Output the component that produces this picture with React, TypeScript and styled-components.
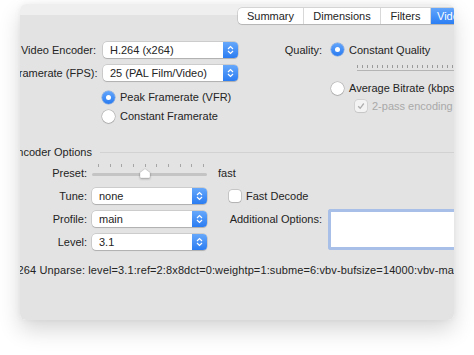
import styled, { createGlobalStyle } from 'styled-components';

const GlobalStyle = createGlobalStyle`
  html, body {
    margin: 0;
    background: #ffffff;
  }
  body {
    font-family: "Liberation Sans", Arial, sans-serif;
    font-size: 11px;
    color: #242424;
  }
`;

const Page = styled.div`
  width: 474px;
  height: 355px;
  padding: 4px 0 0 20px;
  box-sizing: border-box;
  overflow: hidden;
`;

const Window = styled.div`
  width: 434px;
  height: 316px;
  border-radius: 6px;
  overflow: hidden;
  background: linear-gradient(to bottom, #efefef 0, #efefef 11px, #e3e3e3 11px);
  box-shadow: 0 10px 22px rgba(0, 0, 0, 0.16), 0 0 6px rgba(0, 0, 0, 0.05);
`;

const TabBar = styled.div`
  display: flex;
  width: max-content;
  height: 16px;
  margin: 4px 0 0 218px;
  border-radius: 4px;
  background: #ffffff;
  box-shadow: 0 0 0 0.5px rgba(0, 0, 0, 0.22), 0 1px 1px rgba(0, 0, 0, 0.1);
  overflow: hidden;
`;

const Tab = styled.div<{ $w: number; $active?: boolean }>`
  width: ${p => p.$w}px;
  display: flex;
  align-items: center;
  justify-content: ${p => (p.$active ? 'flex-start' : 'center')};
  padding-left: ${p => (p.$active ? '6px' : '0')};
  box-sizing: border-box;
  line-height: 16px;
  background: ${p => (p.$active ? 'linear-gradient(#62a5fb, #2b7ef4)' : 'transparent')};
  color: ${p => (p.$active ? '#ffffff' : '#242424')};

  & + & {
    border-left: 1px solid #d8d8d8;
  }
`;

const Content = styled.div`
  margin-left: -8px;
`;

const TopSection = styled.div`
  display: flex;
  gap: 12px;
  padding-top: 17px;
`;

const Column = styled.div<{ $w?: number }>`
  display: flex;
  flex-direction: column;
  width: ${p => (p.$w ? `${p.$w}px` : 'auto')};
  flex: ${p => (p.$w ? 'none' : '1')};
`;

const FormRow = styled.div<{ $cols: string; $gap: number; $h: number; $mt?: number }>`
  display: grid;
  grid-template-columns: ${p => p.$cols};
  column-gap: ${p => p.$gap}px;
  align-items: center;
  height: ${p => p.$h}px;
  margin-top: ${p => p.$mt ?? 0}px;
  white-space: nowrap;
`;

const Label = styled.span`
  text-align: right;
  white-space: nowrap;
  direction: rtl;
  unicode-bidi: plaintext;
`;

const Popup = styled.div<{ $w: number }>`
  display: flex;
  align-items: center;
  width: ${p => p.$w}px;
  height: 16px;
  padding-left: 7px;
  box-sizing: border-box;
  border-radius: 4px;
  background: #ffffff;
  box-shadow: 0 0 0 0.5px rgba(0, 0, 0, 0.2), 0 1px 1px rgba(0, 0, 0, 0.14);
`;

const Stepper = styled.span`
  display: flex;
  align-items: center;
  justify-content: center;
  width: 15px;
  height: 100%;
  margin-left: auto;
  border-radius: 0 4px 4px 0;
  background: linear-gradient(#66a8fb, #2b7cf2);
`;

const Choice = styled.label<{ $indent?: number; $disabled?: boolean }>`
  display: flex;
  align-items: center;
  gap: 5px;
  margin-left: ${p => p.$indent ?? 0}px;
  color: ${p => (p.$disabled ? '#a9a9a9' : '#242424')};
`;

const Radio = styled.span<{ $on?: boolean }>`
  display: flex;
  align-items: center;
  justify-content: center;
  width: 13px;
  height: 13px;
  border-radius: 50%;
  flex: none;
  background: ${p => (p.$on ? 'linear-gradient(#62a5fb, #2a7bf1)' : '#ffffff')};
  box-shadow: ${p =>
    p.$on
      ? '0 0 0 0.5px rgba(30, 100, 210, 0.5)'
      : '0 0 0 0.5px rgba(0, 0, 0, 0.25), 0 1px 1px rgba(0, 0, 0, 0.12)'};

  &::after {
    content: '';
    display: ${p => (p.$on ? 'block' : 'none')};
    width: 5px;
    height: 5px;
    border-radius: 50%;
    background: #ffffff;
  }
`;

const Check = styled.span<{ $disabled?: boolean }>`
  display: flex;
  align-items: center;
  justify-content: center;
  width: 12px;
  height: 12px;
  flex: none;
  border-radius: 3px;
  background: #ffffff;
  opacity: ${p => (p.$disabled ? 0.6 : 1)};
  box-shadow: 0 0 0 0.5px rgba(0, 0, 0, 0.25), 0 1px 1px rgba(0, 0, 0, 0.1);
`;

const TickLine = styled.div`
  height: 6px;
  margin-left: 26px;
  background:
    linear-gradient(#b4b4b4, #b4b4b4) bottom / 100% 1px no-repeat,
    repeating-linear-gradient(to right, #9a9a9a 0 1px, transparent 1px 5px) top / 100% 3px no-repeat;
`;

const SectionHeader = styled.div`
  display: flex;
  align-items: center;
  height: 14px;
  margin: 22px 0 0 -2px;

  &::after {
    content: '';
    flex: 1;
    height: 1px;
    margin-left: 8px;
    background: #d2d2d2;
  }
`;

const EncoderGrid = styled.div`
  display: grid;
  grid-template-columns: 80px 126px 110px 1fr;
  grid-template-rows: repeat(4, 17px);
  row-gap: 6px;
  align-items: center;
  margin-top: 5px;
  white-space: nowrap;
`;

const GridLabel = styled.span<{ $pad: number }>`
  text-align: right;
  padding-right: ${p => p.$pad}px;
`;

const Slider = styled.div`
  position: relative;
  width: 115px;
  height: 17px;
`;

const Track = styled.div`
  position: absolute;
  left: 0;
  right: 0;
  top: 9px;
  height: 3px;
  border-radius: 2px;
  background: #c4c4c4;
`;

const Tick = styled.span`
  position: absolute;
  top: 0;
  width: 1px;
  height: 3px;
  background: #a6a6a6;
`;

const Knob = styled.svg`
  position: absolute;
  top: 4px;
  filter: drop-shadow(0 1px 1px rgba(0, 0, 0, 0.25));
`;

const TextArea = styled.div`
  grid-column: 4;
  grid-row: 3 / span 2;
  align-self: stretch;
  margin-top: -1px;
  border: 3px solid #a8bfe8;
  border-right: none;
  border-radius: 3px 0 0 3px;
  background: #ffffff;
`;

const Unparse = styled.div`
  margin-top: 13px;
  line-height: 14px;
  letter-spacing: 0.12px;
  white-space: nowrap;
`;

function Arrows() {
  return (
    <svg width="7" height="10" viewBox="0 0 7 10">
      <path d="M1 4 L3.5 1.6 L6 4 M1 6 L3.5 8.4 L6 6" stroke="#ffffff" strokeWidth="1.2" fill="none" />
    </svg>
  );
}

function PopupButton({ value, width }: { value: string; width: number }) {
  return (
    <Popup $w={width}>
      {value}
      <Stepper>
        <Arrows />
      </Stepper>
    </Popup>
  );
}

function PresetSlider() {
  const ticks = Array.from({ length: 10 }, (_, i) => 6 + i * (105 / 9));
  const knob = ticks[4];
  return (
    <Slider>
      {ticks.map(x => (
        <Tick key={x} style={{ left: x }} />
      ))}
      <Track />
      <Knob width="12" height="11" viewBox="0 0 12 11" style={{ left: knob - 6 }}>
        <path d="M1 4.5 L6 0.8 L11 4.5 L11 9 Q11 10 10 10 L2 10 Q1 10 1 9 Z" fill="#ffffff" stroke="rgba(0,0,0,0.18)" strokeWidth="0.6" />
      </Knob>
    </Slider>
  );
}

export default function App() {
  return (
    <>
      <GlobalStyle />
      <Page>
        <Window>
          <TabBar>
            <Tab $w={65}>Summary</Tab>
            <Tab $w={77}>Dimensions</Tab>
            <Tab $w={50}>Filters</Tab>
            <Tab $w={48} $active>Video</Tab>
          </TabBar>
          <Content>
            <TopSection>
              <Column $w={226}>
                <FormRow $cols="84px 135px" $gap={7} $h={17}>
                  <Label>Video Encoder:</Label>
                  <PopupButton value="H.264 (x264)" width={135} />
                </FormRow>
                <FormRow $cols="84px 135px" $gap={7} $h={17} $mt={6}>
                  <Label>Framerate (FPS):</Label>
                  <PopupButton value="25 (PAL Film/Video)" width={135} />
                </FormRow>
                <FormRow $cols="84px 135px" $gap={6} $h={14} $mt={9}>
                  <span />
                  <Choice>
                    <Radio $on />
                    Peak Framerate (VFR)
                  </Choice>
                </FormRow>
                <FormRow $cols="84px 135px" $gap={6} $h={14} $mt={5}>
                  <span />
                  <Choice>
                    <Radio />
                    Constant Framerate
                  </Choice>
                </FormRow>
              </Column>
              <Column>
                <FormRow $cols="72px 1fr" $gap={9} $h={17}>
                  <Label>Quality:</Label>
                  <Choice>
                    <Radio $on />
                    Constant Quality
                  </Choice>
                </FormRow>
                <FormRow $cols="72px 1fr" $gap={9} $h={6} $mt={7}>
                  <span />
                  <TickLine />
                </FormRow>
                <FormRow $cols="72px 1fr" $gap={9} $h={14} $mt={10}>
                  <span />
                  <Choice>
                    <Radio />
                    Average Bitrate (kbps):
                  </Choice>
                </FormRow>
                <FormRow $cols="72px 1fr" $gap={9} $h={14} $mt={4}>
                  <span />
                  <Choice $indent={24} $disabled>
                    <Check $disabled>
                      <svg width="8" height="8" viewBox="0 0 8 8">
                        <path d="M1.2 4.2 L3.2 6.3 L6.8 1.5" stroke="#8c8c8c" strokeWidth="1.3" fill="none" />
                      </svg>
                    </Check>
                    2-pass encoding
                  </Choice>
                </FormRow>
              </Column>
            </TopSection>

            <SectionHeader>Encoder Options</SectionHeader>

            <EncoderGrid>
              <GridLabel $pad={5}>Preset:</GridLabel>
              <PresetSlider />
              <span>fast</span>
              <span />

              <GridLabel $pad={5}>Tune:</GridLabel>
              <PopupButton value="none" width={115} />
              <Choice $indent={11}>
                <Check />
                Fast Decode
              </Choice>
              <span />

              <GridLabel $pad={5}>Profile:</GridLabel>
              <PopupButton value="main" width={115} />
              <GridLabel $pad={6}>Additional Options:</GridLabel>
              <TextArea />

              <GridLabel $pad={5}>Level:</GridLabel>
              <PopupButton value="3.1" width={115} />
              <span />
            </EncoderGrid>

            <Unparse>
              x264 Unparse: level=3.1:ref=2:8x8dct=0:weightp=1:subme=6:vbv-bufsize=14000:vbv-maxrate=14000
            </Unparse>
          </Content>
        </Window>
      </Page>
    </>
  );
}
